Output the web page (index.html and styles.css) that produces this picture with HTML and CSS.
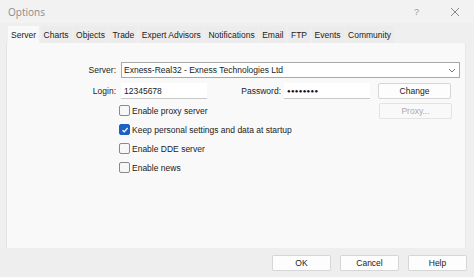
FILE: index.html
```html
<!DOCTYPE html>
<html>
  <head>
    <title>Options</title>
    <link rel="stylesheet" href="styles.css">
  </head>
  <body>
    <div class="dialog">
      <div class="titlebar">
        <span class="title">Options</span>
        <span class="help">?</span>
        <span class="close">
          <svg width="10" height="10" viewBox="0 0 10 10"><path d="M1 1L9 9M9 1L1 9" stroke="#8a8a8a" stroke-width="1" fill="none"/></svg>
        </span>
      </div>
      <div class="tabs">
        <span class="tab active">Server</span>
        <span class="tab">Charts</span>
        <span class="tab">Objects</span>
        <span class="tab">Trade</span>
        <span class="tab">Expert Advisors</span>
        <span class="tab">Notifications</span>
        <span class="tab">Email</span>
        <span class="tab">FTP</span>
        <span class="tab">Events</span>
        <span class="tab">Community</span>
      </div>
      <div class="panel">
        <div class="row server-row">
          <label class="lbl">Server:</label>
          <div class="combo">
            <span>Exness-Real32 - Exness Technologies Ltd</span>
            <svg width="8" height="5" viewBox="0 0 8 5"><path d="M1 1L4 4L7 1" stroke="#777" fill="none"/></svg>
          </div>
        </div>
        <div class="row login-row">
          <label class="lbl">Login:</label>
          <div class="field">12345678</div>
          <label class="lbl pass-lbl">Password:</label>
          <div class="field dots">&#9679;&#9679;&#9679;&#9679;&#9679;&#9679;&#9679;&#9679;</div>
          <button class="btn side">Change</button>
        </div>
        <div class="row check-row">
          <label class="check"><span class="box"></span>Enable proxy server</label>
          <button class="btn side disabled">Proxy...</button>
        </div>
        <div class="row check-row">
          <label class="check"><span class="box on">
            <svg width="8" height="8" viewBox="0 0 8 8"><path d="M1.5 4.2L3.2 5.8L6.6 2" stroke="#fff" stroke-width="1.2" fill="none"/></svg>
          </span>Keep personal settings and data at startup</label>
        </div>
        <div class="row check-row">
          <label class="check"><span class="box"></span>Enable DDE server</label>
        </div>
        <div class="row check-row">
          <label class="check"><span class="box"></span>Enable news</label>
        </div>
      </div>
      <div class="footer">
        <button class="btn foot">OK</button>
        <button class="btn foot">Cancel</button>
        <button class="btn foot">Help</button>
      </div>
    </div>
  </body>
</html>
```

FILE: styles.css
```css
body {
  margin: 0;
  font-family: "Liberation Sans", Arial, sans-serif;
  font-size: 8.5px;
  color: #1a1a1a;
  background: #efefef;
}

.dialog {
  width: 474px;
  height: 277px;
  display: flex;
  flex-direction: column;
  background: #efefef;
}

.titlebar {
  height: 23px;
  display: flex;
  align-items: center;
  padding: 0 0 0 8px;
  background: #f2f2f2;
}
.title {
  flex-grow: 1;
  font-family: "Open Sans", sans-serif;
  font-size: 10px;
  color: #8c8c8c;
}
.help {
  color: #9a9a9a;
  font-size: 9px;
  margin-right: 31px;
}
.close {
  display: flex;
  margin-right: 14px;
}

.tabs {
  display: flex;
  height: 17px;
  margin: 3px 0 0 8px;
  align-items: stretch;
}
.tab {
  display: flex;
  align-items: center;
  padding: 0 3px;
  margin-right: 1.5px;
  background: #ececec;
  color: #222;
}
.tab.active {
  background: #f9f9f9;
}

.panel {
  flex-grow: 1;
  margin: 0 8px 0 6px;
  background: #f9f9f9;
  border-left: 1px solid #e2e2e2;
  border-right: 1px solid #e8e8e8;
  padding: 19px 0 0 0;
}

.row {
  display: flex;
  align-items: center;
}
.lbl {
  width: 109px;
  text-align: right;
  padding-right: 5px;
  color: #222;
}
.pass-lbl {
  width: 74px;
  padding-right: 3px;
}
.combo {
  width: 332px;
  height: 14px;
  border: 1px solid #a8a8a8;
  background: #fff;
  display: flex;
  align-items: center;
  justify-content: space-between;
  padding: 0 3px 0 2px;
  box-sizing: content-box;
}
.login-row {
  margin-top: 5px;
}
.field {
  width: 80px;
  height: 15px;
  border-bottom: 1px solid #c8c8c8;
  background: #fff;
  padding: 0 3px;
  display: flex;
  align-items: center;
}
.dots {
  font-size: 6px;
  letter-spacing: 0.3px;
  color: #111;
}
.btn {
  font-family: inherit;
  font-size: 8.5px;
  color: #1a1a1a;
  background: #fdfdfd;
  border: 1px solid #d6d6d6;
  border-radius: 2px;
  padding: 0;
}
.side {
  width: 73px;
  height: 16px;
  margin-left: auto;
  margin-right: 13px;
}
.login-row .side {
  margin-left: 8px;
}
.disabled {
  color: #a9a9a9;
  background: #f9f9f9;
  border-color: #e3e3e3;
}
.check-row {
  height: 19px;
  padding-left: 112px;
}
.check-row:nth-child(3) {
  margin-top: 2px;
}
.check {
  display: flex;
  align-items: center;
  color: #1a1a1a;
}
.box {
  width: 9px;
  height: 9px;
  border: 1px solid #8a8a8a;
  border-radius: 2px;
  background: #f7f7f7;
  margin-right: 2px;
  display: flex;
  align-items: center;
  justify-content: center;
}
.box.on {
  background: #1b62c4;
  border-color: #1b62c4;
}

.footer {
  height: 29px;
  display: flex;
  align-items: center;
  justify-content: flex-end;
  gap: 9px;
  padding-right: 7px;
  background: #eeeeee;
}
.foot {
  width: 59px;
  height: 16px;
}
```
